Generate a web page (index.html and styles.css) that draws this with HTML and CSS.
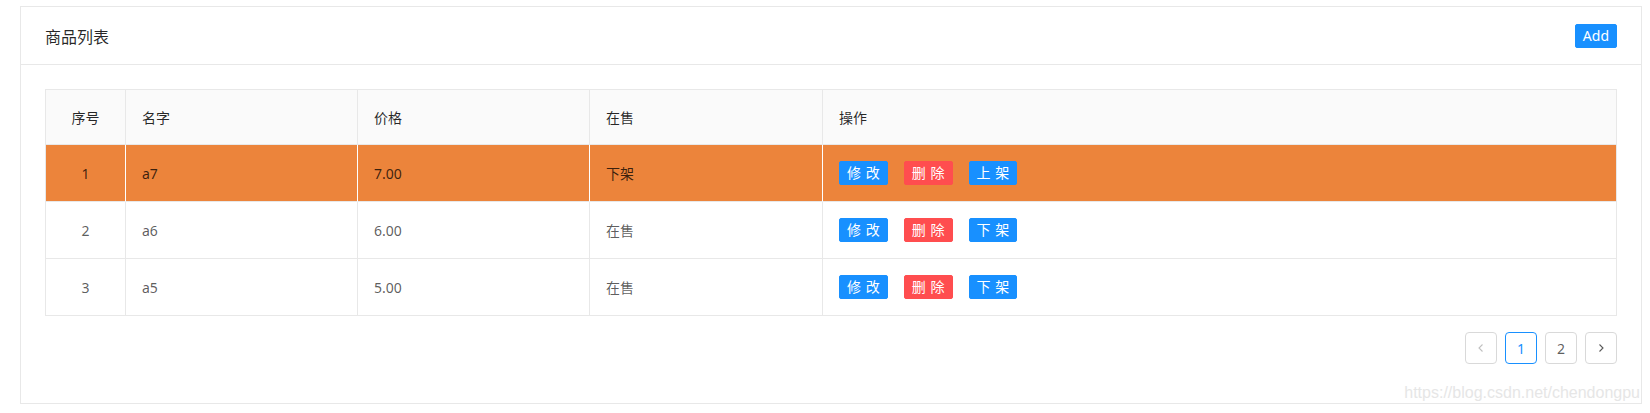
FILE: index.html
```html
<!DOCTYPE html>
<html lang="zh-CN">
<head>
    <meta charset="UTF-8">
    <meta name="viewport" content="width=device-width, initial-scale=1.0">
    <title>商品列表</title>
    <link rel="stylesheet" href="styles.css">
</head>
<body>
    <div class="card">
        <!-- Card header -->
        <div class="card-head">
            <div class="card-title">商品列表</div>
            <button class="btn btn-primary">Add</button>
        </div>

        <div class="card-body">
            <table class="goods-table">
                <thead>
                    <tr>
                        <th class="col-index">序号</th>
                        <th class="col-name">名字</th>
                        <th class="col-price">价格</th>
                        <th class="col-status">在售</th>
                        <th>操作</th>
                    </tr>
                </thead>
                <tbody>
                    <tr class="row-off">
                        <td class="col-index">1</td>
                        <td>a7</td>
                        <td>7.00</td>
                        <td>下架</td>
                        <td>
                            <div class="actions">
                                <button class="btn btn-primary btn-cn"><span>修改</span></button>
                                <button class="btn btn-danger btn-cn"><span>删除</span></button>
                                <button class="btn btn-primary btn-cn"><span>上架</span></button>
                            </div>
                        </td>
                    </tr>
                    <tr>
                        <td class="col-index">2</td>
                        <td>a6</td>
                        <td>6.00</td>
                        <td>在售</td>
                        <td>
                            <div class="actions">
                                <button class="btn btn-primary btn-cn"><span>修改</span></button>
                                <button class="btn btn-danger btn-cn"><span>删除</span></button>
                                <button class="btn btn-primary btn-cn"><span>下架</span></button>
                            </div>
                        </td>
                    </tr>
                    <tr>
                        <td class="col-index">3</td>
                        <td>a5</td>
                        <td>5.00</td>
                        <td>在售</td>
                        <td>
                            <div class="actions">
                                <button class="btn btn-primary btn-cn"><span>修改</span></button>
                                <button class="btn btn-danger btn-cn"><span>删除</span></button>
                                <button class="btn btn-primary btn-cn"><span>下架</span></button>
                            </div>
                        </td>
                    </tr>
                </tbody>
            </table>

            <!-- Pagination -->
            <ul class="pagination">
                <li class="page-item disabled">
                    <svg width="10" height="10" viewBox="0 0 10 10"><path d="M6.5 1.5 3 5l3.5 3.5" fill="none" stroke="currentColor" stroke-width="1.1"/></svg>
                </li>
                <li class="page-item active">1</li>
                <li class="page-item">2</li>
                <li class="page-item">
                    <svg width="10" height="10" viewBox="0 0 10 10"><path d="M3.5 1.5 7 5 3.5 8.5" fill="none" stroke="currentColor" stroke-width="1.1"/></svg>
                </li>
            </ul>
        </div>

        <div class="watermark">https://blog.csdn.net/chendongpu</div>
    </div>
</body>
</html>
```

FILE: styles.css
```css
* {
    margin: 0;
    padding: 0;
    box-sizing: border-box;
}

body {
    font-family: "Noto Sans", "Noto Sans CJK SC", sans-serif;
    font-size: 14px;
    color: rgba(0, 0, 0, 0.65);
    background: #fff;
    padding: 6px 8px 0 20px;
}

.card {
    position: relative;
    height: 398px;
    background: #fff;
    border: 1px solid #e8e8e8;
}

.card-head {
    display: flex;
    align-items: center;
    justify-content: space-between;
    height: 58px;
    padding: 0 24px;
    border-bottom: 1px solid #e8e8e8;
}

.card-title {
    font-size: 16px;
    color: rgba(0, 0, 0, 0.85);
}

.card-body {
    padding: 24px;
}

.btn {
    height: 24px;
    padding: 0 7px;
    font-family: "Noto Sans", "Noto Sans CJK SC", sans-serif;
    font-size: 14px;
    line-height: 22px;
    color: #fff;
    white-space: nowrap;
    border: 1px solid transparent;
    border-radius: 2px;
    cursor: pointer;
}

.btn-primary {
    background-color: #1890ff;
    border-color: #1890ff;
}

.btn-danger {
    background-color: #ff4d4f;
    border-color: #ff4d4f;
}

.btn-cn span {
    letter-spacing: 0.34em;
    margin-right: -0.34em;
}

.goods-table {
    width: 100%;
    border-collapse: separate;
    border-spacing: 0;
    border-top: 1px solid #e8e8e8;
    border-left: 1px solid #e8e8e8;
    table-layout: fixed;
}

.goods-table th,
.goods-table td {
    padding: 0 16px;
    text-align: left;
    border-right: 1px solid #e8e8e8;
    border-bottom: 1px solid #e8e8e8;
}

.goods-table th {
    height: 55px;
    background: #fafafa;
    font-weight: normal;
    color: rgba(0, 0, 0, 0.85);
}

.goods-table td {
    height: 57px;
}

.goods-table .col-index {
    width: 80px;
    text-align: center;
}

.goods-table .col-name,
.goods-table .col-price {
    width: 232px;
}

.goods-table .col-status {
    width: 233px;
}

.row-off td {
    background: #ec843b;
    color: rgba(0, 0, 0, 0.75);
    border-right-color: #fff;
}

.row-off td:last-child {
    border-right-color: #e8e8e8;
}

.actions {
    display: flex;
    gap: 16px;
}

.pagination {
    list-style: none;
    display: flex;
    justify-content: flex-end;
    gap: 8px;
    margin-top: 16px;
}

.page-item {
    display: flex;
    align-items: center;
    justify-content: center;
    width: 32px;
    height: 32px;
    border: 1px solid #d9d9d9;
    border-radius: 4px;
    color: rgba(0, 0, 0, 0.65);
    cursor: pointer;
}

.page-item.active {
    border-color: #1890ff;
    color: #1890ff;
}

.page-item.disabled {
    color: rgba(0, 0, 0, 0.25);
    cursor: not-allowed;
}

.watermark {
    position: absolute;
    right: 1px;
    bottom: 0;
    font-family: "Liberation Sans", Arial, sans-serif;
    font-size: 16px;
    color: #e6e6e6;
    line-height: 20px;
}
```
